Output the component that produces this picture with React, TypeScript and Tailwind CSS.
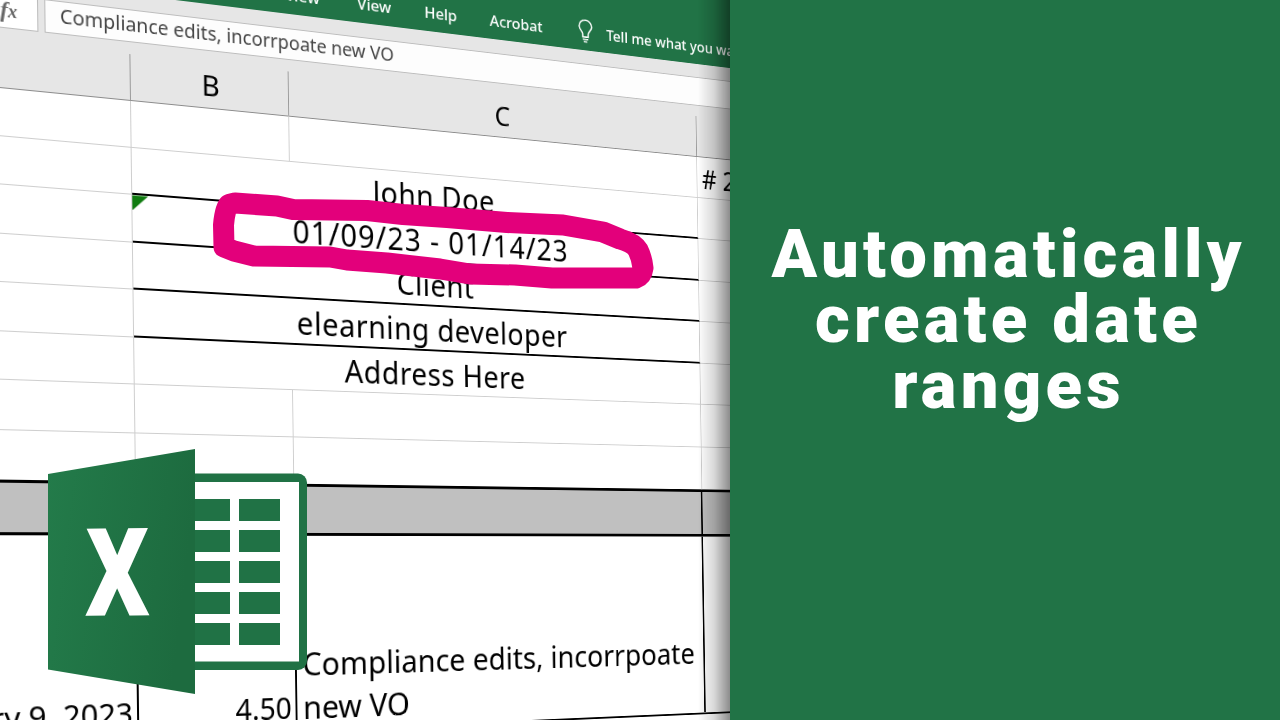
import { clsx } from 'clsx';

const MERGED_ROWS = [
  { text: 'John Doe', underline: true },
  { text: '01/09/23 - 01/14/23', underline: true, flagged: true },
  { text: 'Client', underline: true },
  { text: 'elearning developer', underline: true },
  { text: 'Address Here', underline: false },
];

export default function App() {
  return (
    <main className="flex h-[720px] w-[1280px] overflow-hidden bg-[#217346]">
      <section className="relative h-full w-[730px] shrink-0 overflow-hidden bg-white">
        <Workbook />
        <MarkerCircle />
        <ExcelLogo />
        <div className="absolute inset-y-0 right-0 w-8 bg-linear-to-r from-black/0 via-black/15 to-black/45" />
      </section>

      <section className="flex flex-1 items-center justify-center pb-20 pl-[7px]">
        <h1 className="text-center font-['Roboto',sans-serif] text-[67px] leading-[65.5px] font-black tracking-[4.2px] text-white">
          Automatically
          <br />
          create date
          <br />
          ranges
        </h1>
      </section>
    </main>
  );
}

// The whole workbook is laid out flat, then tilted in perspective.
function Workbook() {
  return (
    <div className="mt-px h-[900px] w-[878px] origin-top-left font-['Noto_Sans',sans-serif] text-black [transform:matrix3d(1.06372,0.125337,0,0.00023083,0.012904,1.029831,0,-0.000004913,0,0,1,0,-26.732,-121.403,0,1)]">
      <Ribbon />
      <FormulaBar />
      <ColumnHeaders />
      <Sheet />
    </div>
  );
}

function Ribbon() {
  return (
    <div className="flex h-[93px] items-end bg-[#217346] pb-2 pl-[292px] text-[17px] leading-6 font-medium whitespace-nowrap text-white">
      <span className="w-[98px] shrink-0">Review</span>
      <span className="w-[76px] shrink-0">View</span>
      <span className="w-[76px] shrink-0">Help</span>
      <span className="w-[106px] shrink-0">Acrobat</span>
      <svg viewBox="0 0 18 24" className="mr-4 h-[27px] w-5 shrink-0" fill="none" stroke="white" strokeWidth="1.5">
        <path d="M6 18v-3C6 12.500 2 11 2 7.500a7 6.500 0 0 1 14 0C16 11 12 12.500 12 15V18z" />
        <path d="M6 20.300h6M7 22.800h4" />
      </svg>
      <span>Tell me what you want to do</span>
    </div>
  );
}

function FormulaBar() {
  return (
    <div className="flex h-12 gap-[6px] bg-[#e6e6e6] pt-[15px] text-[#444]">
      <div className="flex w-[60px] items-center justify-end border border-[#bdbdbd] bg-white pr-[19px] pb-1 font-['Liberation_Serif',serif] text-[22px] font-bold text-[#666] italic">
        f<span className="pt-1 text-[18px]">x</span>
      </div>
      <div className="flex flex-1 items-center border border-[#bdbdbd] bg-[#fdfdfd] pb-[3px] pl-[14px] text-[19.5px]">
        Compliance edits, incorrpoate new VO
      </div>
    </div>
  );
}

function ColumnHeaders() {
  return (
    <div className="flex h-[59px] items-end border-b border-[#8c8c8c] bg-[#e6e6e6] text-[29px]">
      <div className="h-[46px] w-[150px] border-r border-[#9a9a9a]" />
      <div className="flex h-[46px] w-[164px] items-center justify-center border-r border-[#9a9a9a]">B</div>
      <div className="flex h-[46px] w-[484px] items-center justify-center border-r border-[#9a9a9a]">C</div>
      <div className="h-[46px] w-20" />
    </div>
  );
}

function Sheet() {
  return (
    <div className="bg-white text-[30px] whitespace-nowrap">
      <div className="flex h-[47px]">
        <Cell className="w-[150px]" />
        <Cell className="w-[164px]" />
        <Cell className="w-[484px]" />
        <Cell className="flex w-20 items-end pl-[6px] leading-[42px]"># 23</Cell>
      </div>

      {MERGED_ROWS.map((row) => (
        <div key={row.text} className="flex h-[47.4px]">
          <Cell className="w-[150px]" />
          <div
            className={clsx(
              'relative flex w-[648px] items-end justify-center border-r border-r-[#cecece] pl-0.5 text-[32px] leading-[42px]',
              row.underline ? 'border-b-2 border-b-black' : 'border-b border-b-[#cecece]',
              row.flagged ? 'tracking-[1.2px]' : 'tracking-[0.5px]'
            )}
          >
            {row.flagged && (
              <span className="absolute top-0 left-0 h-[15px] w-4 bg-[#107c10] [clip-path:polygon(0_0,100%_0,0_100%)]" />
            )}
            {row.text}
          </div>
          <Cell className="w-20" />
        </div>
      ))}

      <div className="flex h-[49px]">
        <Cell className="w-[150px]" />
        <Cell className="w-[164px]" />
        <Cell className="w-[484px]" />
        <Cell className="w-20" />
      </div>
      <div className="flex h-12">
        <div className="w-[150px] border-r border-[#cecece]" />
        <div className="w-[164px] border-r border-[#cecece]" />
        <div className="w-[484px] border-r border-[#cecece]" />
      </div>

      <div className="flex h-[54px] border-y-[3px] border-black bg-[#c0c0c0]">
        <div className="w-[798px] border-r-2 border-black" />
      </div>

      <div className="flex h-[203px] items-stretch border-b-2 border-black leading-[45px]">
        <div className="flex w-[150px] items-end justify-end border-r-2 border-black pr-1 pb-px">January 9, 2023</div>
        <div className="flex w-[164px] items-end justify-end border-r-2 border-black pr-1 pb-px">4.50</div>
        <div className="flex w-[484px] items-end border-r-2 border-black pb-px pl-[6px] text-[33px]">
          <p>
            Compliance edits, incorrpoate
            <br />
            new VO
          </p>
        </div>
      </div>
    </div>
  );
}

function Cell({ className, children }: { className: string; children?: React.ReactNode }) {
  return <div className={clsx('border-r border-b border-[#cecece]', className)}>{children}</div>;
}

function MarkerCircle() {
  return (
    <svg
      viewBox="0 0 730 720"
      className="absolute inset-0 h-full w-full"
      fill="none"
      stroke="#e3007b"
      strokeWidth="21"
      strokeLinejoin="round"
    >
      <path d="M224 247 L223.500 225 Q225 208 229 204.500 L235 203 L277 206 L293 209.500 L367 210.500 L403 214.500 L447 217.500 L507 222.500 L563 225 L603 232 L620 239 Q634 243 638 250 Q642 258 643 268 Q642 276 636 278 L552 278 L515 275 L470 274 L440 269 L387 263 L347 260 L330 257 L254 256 L234 251 Z" />
    </svg>
  );
}

function ExcelLogo() {
  return (
    <svg viewBox="0 0 260 246" className="absolute top-[449px] left-12 h-[246px] w-[260px]">
      <defs>
        <linearGradient id="door" x1="0" x2="1" y1="0" y2="0.2">
          <stop offset="0" stopColor="#237b4a" />
          <stop offset="1" stopColor="#1d6b3f" />
        </linearGradient>
      </defs>
      <rect x="120" y="24.500" width="139" height="196.500" rx="9" fill="#207245" />
      <rect x="140" y="33" width="111" height="179.500" fill="white" />
      {[50, 81, 112, 143, 174].map((y) => (
        <g key={y} fill="#207245">
          <rect x="140" y={y} width="42" height="22" />
          <rect x="191" y={y} width="41" height="22" />
        </g>
      ))}
      <path d="M0 25 L147 0 V245 L0 220.500 Z" fill="url(#door)" />
      <text
        x="0"
        y="0"
        transform="translate(69.500 166.500) skewY(-0.5) scale(0.73 1)"
        textAnchor="middle"
        fill="white"
        className="font-['Open_Sans',sans-serif] text-[122px] font-extrabold"
      >
        X
      </text>
    </svg>
  );
}
